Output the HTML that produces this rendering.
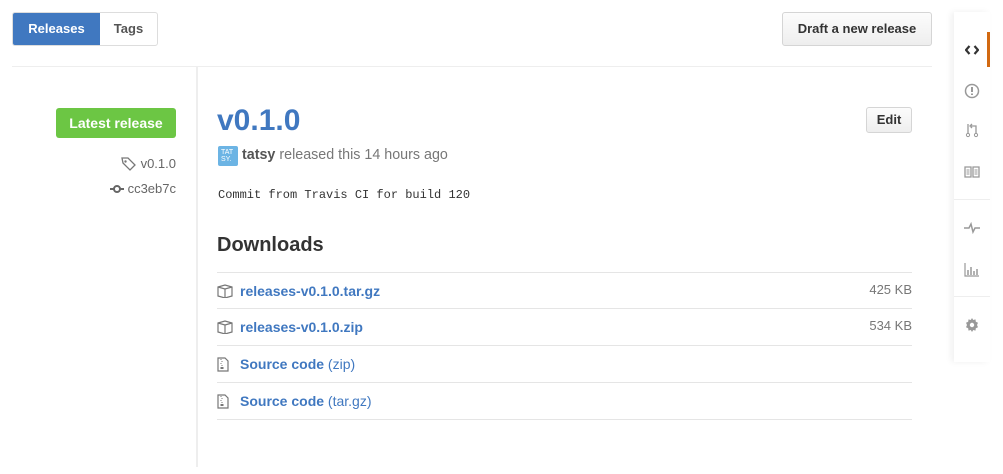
<!DOCTYPE html>
<html><head><style>
*{box-sizing:border-box;margin:0;padding:0}
body{width:1003px;height:474px;background:#fff;font-family:"Liberation Sans",Arial,sans-serif;color:#333;position:relative;overflow:hidden;font-size:14px}
.abs{position:absolute}
.seg{left:12px;top:12px;height:34px;display:flex;border:1px solid #ddd;border-radius:3px;overflow:hidden;font-weight:bold;font-size:13px}
.seg div{line-height:32px}
.seg .on{background:#4078c0;color:#fff;width:87px;text-align:center}
.seg .off{color:#555;width:57px;text-align:center}
.btn{border:1px solid #d5d5d5;border-radius:3px;background:linear-gradient(#fcfcfc,#eee);font-weight:bold;font-size:13px;color:#333;text-align:center}
a{color:#4078c0;text-decoration:none;font-weight:bold}
.row{left:217px;width:695px;height:37px;border-top:1px solid #e5e5e5;line-height:36px}
.row .n{position:absolute;left:23px;font-size:14px}
.row .s{position:absolute;right:0;color:#777;font-size:13px;line-height:36px;top:-1px}
.row svg{position:absolute;left:0;top:11px}
</style></head><body>
<div class="abs seg"><div class="on">Releases</div><div class="off">Tags</div></div>
<div class="abs btn" style="left:782px;top:12px;width:150px;height:34px;line-height:32px">Draft a new release</div>
<div class="abs" style="left:12px;top:66px;width:920px;height:1px;background:#eee"></div>
<div class="abs" style="left:196px;top:67px;width:2px;height:400px;background:#eee"></div>
<div class="abs" style="left:56px;top:108px;width:120px;height:30px;background:#6cc644;border-radius:3px;color:#fff;font-weight:bold;font-size:14px;line-height:30px;text-align:center">Latest release</div>
<div class="abs" style="right:827px;top:156px;color:#666;font-size:13px;display:flex;align-items:center;gap:4px"><svg width="16" height="14" viewBox="0 0 16 14"><path d="M1 1h6l7 7-5 5-7-7z" fill="none" stroke="#777" stroke-width="1.3"/><circle cx="4.5" cy="4.5" r="1.2" fill="#777"/></svg>v0.1.0</div>
<div class="abs" style="right:827px;top:181px;color:#666;font-size:13px;display:flex;align-items:center;gap:4px"><svg width="14" height="10" viewBox="0 0 14 10"><path d="M0 5h4M10 5h4" stroke="#666" stroke-width="2"/><circle cx="7" cy="5" r="3" fill="none" stroke="#666" stroke-width="2"/></svg>cc3eb7c</div>
<div class="abs" style="left:217px;top:104px;font-size:30px;font-weight:bold;color:#4078c0">v0.1.0</div>
<div class="abs btn" style="left:866px;top:107px;width:46px;height:26px;line-height:24px">Edit</div>
<div class="abs" style="left:218px;top:146px;width:20px;height:20px;background:#6cb4e4;border-radius:2px;color:#fff;font-size:7px;line-height:7px;padding:3px 0 0 3px">TAT<br>SY.</div>
<div class="abs" style="left:242px;top:147px;font-size:14.3px;color:#777"><b style="color:#555">tatsy</b> released this 14 hours ago</div>
<div class="abs" style="left:218px;top:188px;font-family:'Liberation Mono',monospace;font-size:12px;color:#333">Commit from Travis CI for build 120</div>
<div class="abs" style="left:217px;top:234px;font-size:20px;font-weight:bold;color:#333">Downloads</div>
<div class="abs row" style="top:272px"><svg width="16" height="14" viewBox="0 0 16 14"><path d="M1 3l7-2 7 2v9l-7 2-7-2z M1 3l7 2 7-2 M8 5v9" fill="none" stroke="#777" stroke-width="1.2"/></svg><a class="n" href="#">releases-v0.1.0.tar.gz</a><span class="s">425 KB</span></div>
<div class="abs row" style="top:308px"><svg width="16" height="14" viewBox="0 0 16 14"><path d="M1 3l7-2 7 2v9l-7 2-7-2z M1 3l7 2 7-2 M8 5v9" fill="none" stroke="#777" stroke-width="1.2"/></svg><a class="n" href="#">releases-v0.1.0.zip</a><span class="s">534 KB</span></div>
<div class="abs row" style="top:345px"><svg width="12" height="15" viewBox="0 0 12 15"><path d="M1 1h7l3 3v10H1z" fill="none" stroke="#777" stroke-width="1.2"/><path d="M4 2v1M5 4v1M4 6v1M5 8v1" stroke="#777"/><rect x="3.5" y="10" width="3" height="2" fill="#777"/></svg><span class="n"><a href="#">Source code</a> <span style="color:#4078c0">(zip)</span></span></div>
<div class="abs row" style="top:382px"><svg width="12" height="15" viewBox="0 0 12 15"><path d="M1 1h7l3 3v10H1z" fill="none" stroke="#777" stroke-width="1.2"/><path d="M4 2v1M5 4v1M4 6v1M5 8v1" stroke="#777"/><rect x="3.5" y="10" width="3" height="2" fill="#777"/></svg><span class="n"><a href="#">Source code</a> <span style="color:#4078c0">(tar.gz)</span></span></div>
<div class="abs" style="left:217px;top:419px;width:695px;height:1px;background:#e5e5e5"></div>
<div class="abs" style="left:954px;top:12px;width:36px;height:350px;background:#fff;box-shadow:-3px 0 6px rgba(0,0,0,.06)"></div>
<div class="abs" style="left:954px;top:199px;width:36px;height:1px;background:#eee"></div>
<div class="abs" style="left:954px;top:296px;width:36px;height:1px;background:#eee"></div>
<div class="abs" style="left:954px;top:32px;width:36px;height:35px;background:#fff;border-right:3px solid #d26911"></div>
<svg class="abs" style="left:965px;top:45px" width="14" height="10" viewBox="0 0 14 10"><path d="M4.5 1L1 5l3.5 4M9.5 1L13 5l-3.5 4" fill="none" stroke="#333" stroke-width="2.2"/></svg>
<svg class="abs" style="left:964px;top:83px" width="16" height="16"><circle cx="8" cy="8" r="6.5" fill="none" stroke="#999" stroke-width="1.5"/><path d="M8 4v5M8 10.5v1.5" stroke="#999" stroke-width="2"/></svg>
<svg class="abs" style="left:965px;top:122px" width="14" height="16"><circle cx="3" cy="13" r="1.6" fill="none" stroke="#999"/><circle cx="11" cy="13" r="1.6" fill="none" stroke="#999"/><path d="M3 11V2M11 11V4H6M7 2L5 4l2 2" fill="none" stroke="#999" stroke-width="1.3"/></svg>
<svg class="abs" style="left:964px;top:166px" width="16" height="12"><path d="M1 1h6v10H1zM9 1h6v10H9z" fill="none" stroke="#999" stroke-width="1.3"/><path d="M2.5 4h3M2.5 6h3M2.5 8h3M10.5 4h3M10.5 6h3M10.5 8h3" stroke="#999"/></svg>
<svg class="abs" style="left:964px;top:222px" width="16" height="12"><path d="M0 6h5l2-4 2 8 2-4h5" fill="none" stroke="#999" stroke-width="1.5"/></svg>
<svg class="abs" style="left:964px;top:262px" width="16" height="15"><path d="M1 1v13h14" fill="none" stroke="#999" stroke-width="1.2"/><path d="M4 8v5M7 5v8M10 9v4M13 7v6" stroke="#999" stroke-width="1.5"/></svg>
<svg class="abs" style="left:965px;top:318px" width="14" height="14" viewBox="0 0 14 14"><path d="M7 0l1.2 2 2.3-.6.3 2.3 2.2 1-1 2.3 1 2.3-2.2 1-.3 2.3-2.3-.6L7 14l-1.2-2-2.3.6-.3-2.3-2.2-1 1-2.3-1-2.3 2.2-1 .3-2.3 2.3.6z" fill="#999"/><circle cx="7" cy="7" r="2.2" fill="#fff"/></svg>
</body></html>
